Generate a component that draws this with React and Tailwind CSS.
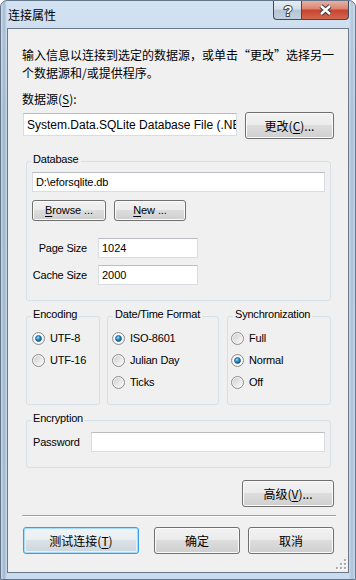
import React from "react";

const LAT = "font-['Liberation_Sans',Arial,sans-serif]";
const CJK = "font-['Noto_Sans_CJK_SC','Noto_Sans',sans-serif]";

function U({ children }) {
  return <span className="underline underline-offset-[2px]">{children}</span>;
}

function Btn({ className = "", def = false, children }) {
  return (
    <button
      type="button"
      className={`h-[27px] shrink-0 rounded-[3px] border flex items-center justify-center text-[12px] leading-[16px] text-black ${CJK} ${
        def
          ? "border-[#3c9fdb] shadow-[inset_0_0_0_1px_#a6dcf7,inset_0_0_0_2px_#e4f3fb] bg-[linear-gradient(180deg,#f2f5f7_0%,#eaeef1_48%,#dbe2e7_50%,#cdd6dc_100%)]"
          : "border-[#707070] shadow-[inset_0_0_0_1px_#fbfbfb] bg-[linear-gradient(180deg,#f2f2f2_0%,#ebebeb_48%,#dddddd_50%,#cfcfcf_100%)]"
      } ${className}`}
    >
      {children}
    </button>
  );
}

function SmallBtn({ className = "", children }) {
  return (
    <button
      type="button"
      className={`h-[21px] shrink-0 rounded-[3px] border border-[#707070] shadow-[inset_0_0_0_1px_#fbfbfb] bg-[linear-gradient(180deg,#f2f2f2_0%,#ebebeb_48%,#dddddd_50%,#cfcfcf_100%)] flex items-center justify-center text-[11px] tracking-[-0.1px] text-black ${LAT} ${className}`}
    >
      {children}
    </button>
  );
}

function Field({ className = "", children }) {
  return (
    <div
      className={`bg-white border border-[#d9dce2] border-t-[#b9bcc3] flex items-center pl-[3px] overflow-hidden whitespace-nowrap text-black ${className}`}
    >
      {children}
    </div>
  );
}

function RadioIcon({ checked }) {
  return (
    <svg width="13" height="13" viewBox="0 0 13 13" className="shrink-0">
      <defs>
        <linearGradient id="rfill" x1="0" y1="0" x2="1" y2="1">
          <stop offset="0" stopColor="#cfcfcf" />
          <stop offset="1" stopColor="#fbfbfb" />
        </linearGradient>
        <radialGradient id="rdot" cx="0.4" cy="0.35" r="0.7">
          <stop offset="0" stopColor="#aee2fb" />
          <stop offset="0.45" stopColor="#2f8fc8" />
          <stop offset="1" stopColor="#0b4f7c" />
        </radialGradient>
      </defs>
      <circle cx="6.5" cy="6.5" r="6" fill="#f4f4f4" stroke="#8c8c8c" strokeWidth="1" />
      <circle cx="6.5" cy="6.5" r="4.5" fill={checked ? "#ffffff" : "url(#rfill)"} />
      {checked && (
        <circle cx="6.5" cy="6.5" r="3" fill="url(#rdot)" stroke="#17537d" strokeWidth="0.7" />
      )}
    </svg>
  );
}

function Radio({ checked, label }) {
  return (
    <div className="h-[22px] flex items-center gap-[5px]">
      <RadioIcon checked={checked} />
      <span className="text-[11px] tracking-[-0.2px] leading-[14px]">{label}</span>
    </div>
  );
}

function Group({ title, className = "", legendClass = "ml-[4px]", children }) {
  return (
    <fieldset
      className={`min-w-0 border border-[#d5dfe5] rounded-[3px] ${className}`}
    >
      <legend
        className={`${legendClass} px-[2px] text-[11px] leading-[12px] pb-[4px] tracking-[-0.2px] text-black`}
      >
        {title}
      </legend>
      {children}
    </fieldset>
  );
}

function Grip() {
  const pts = [
    [8, 0],
    [4, 4],
    [8, 4],
    [0, 8],
    [4, 8],
    [8, 8],
  ];
  return (
    <svg width="11" height="11" viewBox="0 0 11 11">
      {pts.map(([x, y], i) => (
        <g key={i}>
          <rect x={x + 1} y={y + 1} width="2" height="2" fill="#ffffff" />
          <rect x={x} y={y} width="2" height="2" fill="#a9acb0" />
        </g>
      ))}
    </svg>
  );
}

export default function App() {
  return (
    <div
      className={`w-[356px] h-[580px] flex flex-col border border-[#63758b] rounded-t-[7px] overflow-hidden bg-[linear-gradient(to_right,rgba(90,110,135,0)_0px,rgba(90,110,135,0.35)_3px,rgba(90,110,135,0)_6px,rgba(90,110,135,0)_348px,rgba(90,110,135,0.25)_351px,rgba(90,110,135,0)_354px),linear-gradient(180deg,#d2e2f2_0%,#c4d8ed_20%,#c9dcef_100%)] ${LAT}`}
    >
      {/* Title bar */}
      <div className="h-[27px] shrink-0 flex items-start justify-between">
        <div className={`ml-[7px] mt-[6px] text-[12px] leading-[16px] text-black ${CJK}`}>
          连接属性
        </div>
        <div className="flex mr-[6px] h-[19px]">
          <div className="w-[28px] h-full border-b border-l border-[#3d4b5c] rounded-bl-[4px] bg-[linear-gradient(180deg,#e6ecf2_0%,#d3dde7_45%,#b5c4d4_52%,#c3d0dd_100%)] flex items-center justify-center">
            <svg width="12" height="15" viewBox="0 0 12 15">
              <text
                x="6"
                y="12.5"
                textAnchor="middle"
                fontFamily="Liberation Sans, Arial, sans-serif"
                fontWeight="bold"
                fontSize="14"
                fill="#ffffff"
                stroke="#3a4656"
                strokeWidth="2"
                paintOrder="stroke"
              >
                ?
              </text>
            </svg>
          </div>
          <div className="w-[48px] h-full border-b border-l border-r border-[#3d4b5c] rounded-br-[4px] bg-[linear-gradient(180deg,#eab0a3_0%,#da8673_42%,#c9452f_52%,#d2664f_100%)] flex items-center justify-center">
            <svg width="15" height="12" viewBox="0 0 15 12">
              <path d="M3 2 L12 10 M12 2 L3 10" stroke="#3a3a3a" strokeWidth="4.4" />
              <path d="M3 2 L12 10 M12 2 L3 10" stroke="#ffffff" strokeWidth="2.4" />
            </svg>
          </div>
        </div>
      </div>

      {/* Client area */}
      <div className="mx-[6px] h-[545px] shrink-0 border border-[#6b7886] bg-[#f0f0f0] flex flex-col text-black">
        <div className="pl-[14px] pr-[14px] pt-[17px] flex flex-col">
          <div className={`text-[12px] leading-[18px] ${CJK}`}>
            <div className="whitespace-nowrap">输入信息以连接到选定的数据源，或单击“更改”选择另一</div>
            <div className="whitespace-nowrap">个数据源和/或提供程序。</div>
          </div>
          <div className={`mt-[8px] text-[12px] leading-[18px] ${CJK}`}>
            数据源(<U>S</U>):
          </div>
          <div className="mt-[4px] flex items-start">
            <Field className={`ml-[1px] mt-[1px] w-[214px] h-[23px] text-[12px] ${LAT}`}>
              System.Data.SQLite Database File (.NET Framework Data Provider for SQLite)
            </Field>
            <Btn className="ml-[8px] w-[89px]">
              更改(<U>C</U>)...
            </Btn>
          </div>

          {/* Database group */}
          <Group title="Database" className="mt-[14px] ml-[4px] mr-[3px]">
            <div className="px-[5px] pt-[3px] pb-[15px] flex flex-col">
              <Field className="h-[20px] text-[11px] tracking-[-0.1px]">D:\eforsqlite.db</Field>
              <div className="mt-[8px] flex gap-[8px]">
                <SmallBtn className="w-[74px]">
                  <U>B</U>rowse ...
                </SmallBtn>
                <SmallBtn className="w-[72px]">
                  <U>N</U>ew ...
                </SmallBtn>
              </div>
              <div className="mt-[17px] flex items-center">
                <div className="w-[55px] text-right whitespace-nowrap text-[11px] tracking-[-0.2px]">Page Size</div>
                <Field className="ml-[11px] w-[100px] h-[20px] text-[11px]">1024</Field>
              </div>
              <div className="mt-[7px] flex items-center">
                <div className="w-[55px] text-right whitespace-nowrap text-[11px] tracking-[-0.2px]">Cache Size</div>
                <Field className="ml-[11px] w-[100px] h-[20px] text-[11px]">2000</Field>
              </div>
            </div>
          </Group>

          {/* Three option groups */}
          <div className="mt-[7px] ml-[4px] flex items-stretch">
            <Group title="Encoding" className="w-[74px]">
              <div className="pl-[5px] pt-[3px] pb-[11px]">
                <Radio checked label="UTF-8" />
                <Radio label="UTF-16" />
              </div>
            </Group>
            <Group title="Date/Time Format" className="ml-[7px] w-[112px]" legendClass="ml-[5px]">
              <div className="pl-[4px] pt-[3px] pb-[11px]">
                <Radio checked label="ISO-8601" />
                <Radio label="Julian Day" />
                <Radio label="Ticks" />
              </div>
            </Group>
            <Group title="Synchronization" className="ml-[8px] w-[104px]" legendClass="ml-[5px]">
              <div className="pl-[3px] pt-[3px] pb-[11px]">
                <Radio label="Full" />
                <Radio checked label="Normal" />
                <Radio label="Off" />
              </div>
            </Group>
          </div>

          {/* Encryption */}
          <Group title="Encryption" className="mt-[7px] ml-[4px] mr-[3px]">
            <div className="pl-[6px] pr-[5px] pt-[4px] pb-[15px] flex items-center">
              <div className="w-[58px] shrink-0 text-[11px] tracking-[-0.2px]">Password</div>
              <Field className="flex-1 h-[20px]" />
            </div>
          </Group>

          <div className="mt-[12px] flex justify-end">
            <Btn className="w-[92px]">
              高级(<U>V</U>)...
            </Btn>
          </div>

          <div className="mt-[8px] -mr-[2px] border-t border-t-[#a0a0a0] border-b border-b-[#ffffff]" />

          <div className="mt-[10px] flex">
            <Btn def className="ml-[1px] w-[116px]">
              测试连接(<U>T</U>)
            </Btn>
            <Btn className="ml-[15px] w-[86px]">确定</Btn>
            <Btn className="ml-[8px] w-[86px]">取消</Btn>
          </div>
        </div>
        <div className="flex-1 flex justify-end items-end pr-[1px] pb-[2px]">
          <Grip />
        </div>
      </div>
    </div>
  );
}
